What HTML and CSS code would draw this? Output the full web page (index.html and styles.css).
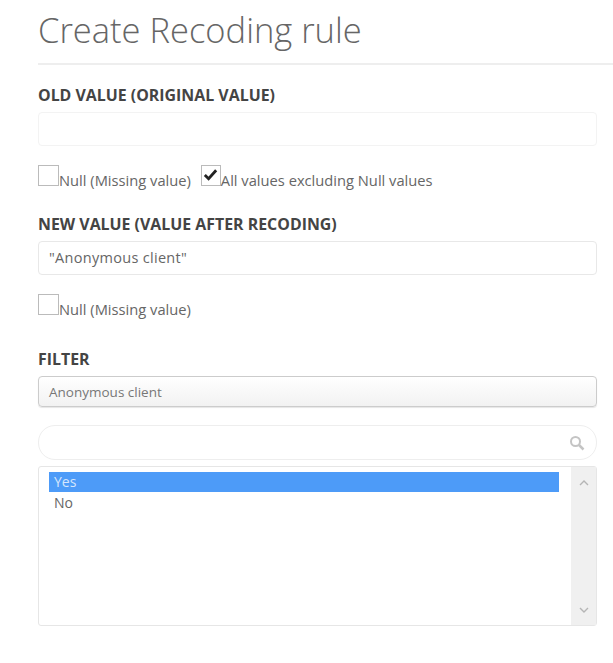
FILE: index.html
```html
<!DOCTYPE html>
<html lang="en">
<head>
    <meta charset="UTF-8">
    <meta name="viewport" content="width=device-width, initial-scale=1.0">
    <title>Create Recoding rule</title>
    <link rel="stylesheet" href="styles.css">
</head>
<body>
    <div class="modal-header">
        <h1>Create Recoding rule</h1>
    </div>
    <div class="modal-body">
        <label class="field-label">OLD VALUE (ORIGINAL VALUE)</label>
        <div class="text-input text-input-faint"></div>
        <div class="check-row">
            <span class="check-box"></span><span class="check-text">Null (Missing value)</span>
            <span class="check-box check-box-small">
                <svg viewBox="0 0 18 18" width="17" height="17"><path d="M3 9.5l4 4 8-9" fill="none" stroke="#222" stroke-width="3"/></svg>
            </span><span class="check-text">All values excluding Null values</span>
        </div>

        <label class="field-label new-label">NEW VALUE (VALUE AFTER RECODING)</label>
        <div class="text-input">"Anonymous client"</div>
        <div class="check-row">
            <span class="check-box"></span><span class="check-text">Null (Missing value)</span>
        </div>

        <label class="field-label filter-label">FILTER</label>
        <div class="select-box">Anonymous client</div>
        <div class="search-box">
            <svg viewBox="0 0 16 16" width="16" height="16"><circle cx="6.5" cy="6.5" r="4.5" fill="none" stroke="#c4c4c4" stroke-width="2"/><path d="M10 10l4.5 4.5" stroke="#c4c4c4" stroke-width="2.5"/></svg>
        </div>
        <div class="list-box">
            <div class="list-items">
                <div class="list-item list-item-selected">Yes</div>
                <div class="list-item">No</div>
            </div>
            <div class="scrollbar">
                <svg viewBox="0 0 10 6" width="10" height="6"><path d="M1 5l4-4 4 4" fill="none" stroke="#b5b5b5" stroke-width="1.4"/></svg>
                <svg viewBox="0 0 10 6" width="10" height="6"><path d="M1 1l4 4 4-4" fill="none" stroke="#b5b5b5" stroke-width="1.4"/></svg>
            </div>
        </div>
    </div>
</body>
</html>
```

FILE: styles.css
```css
* {
    box-sizing: border-box;
}

body {
    font-family: 'Open Sans', sans-serif;
    font-size: 14px;
    color: #666;
    background-color: #fff;
    margin: 0;
    overflow: hidden;
}

.modal-header {
    margin-left: 38px;
    height: 65px;
    padding-top: 8px;
    border-bottom: 2px solid #eee;
}

h1 {
    font-size: 34.5px;
    font-weight: 300;
    line-height: 44px;
    color: #666;
    margin: 0;
}

.modal-body {
    padding: 0 16px 0 38px;
}

.field-label {
    display: block;
    font-size: 15.9px;
    font-weight: 700;
    line-height: 20px;
    color: #444;
    margin-top: 20px;
    margin-bottom: 7px;
}

.new-label {
    margin-top: 28px;
}

.text-input {
    height: 34px;
    border: 1px solid #e8e8e8;
    border-radius: 4px;
    padding: 0 10px;
    line-height: 32px;
    font-size: 14.5px;
    letter-spacing: 0.3px;
}

.text-input-faint {
    border-color: #f3f3f3;
}

.check-row {
    display: flex;
    align-items: flex-end;
    margin-top: 19px;
    height: 21px;
    font-size: 14.7px;
}

.check-box {
    width: 21px;
    height: 21px;
    border: 1px solid #bbb;
    flex-shrink: 0;
}

.check-box-small {
    width: 20px;
    height: 21px;
    margin-left: 10px;
}

.check-box svg {
    display: block;
}

.check-text {
    line-height: 17px;
    transform: translateY(3px);
}

.filter-label {
    margin-top: 34px;
}

.select-box {
    height: 31px;
    border: 1px solid #ccc;
    border-radius: 4px;
    padding: 0 10px;
    line-height: 31px;
    font-size: 13.5px;
    color: #777;
    background: linear-gradient(#fff, #f2f2f2);
    box-shadow: 0 1px 1px rgba(0, 0, 0, 0.1);
}

.search-box {
    display: flex;
    align-items: center;
    justify-content: flex-end;
    height: 35px;
    margin-top: 18px;
    padding-right: 11px;
    border: 1px solid #eee;
    border-radius: 17px;
}

.list-box {
    display: flex;
    height: 160px;
    margin-top: 6px;
    border: 1px solid #e6e6e6;
    border-radius: 3px;
}

.list-items {
    flex: 1;
    padding: 5px 12px 0 10px;
    line-height: 20px;
}

.list-item {
    height: 20px;
    padding-left: 5px;
    margin-bottom: 1px;
}

.list-item-selected {
    background-color: #4d9bf8;
    color: #d5e6fc;
}

.scrollbar {
    display: flex;
    flex-direction: column;
    justify-content: space-between;
    align-items: center;
    width: 25px;
    padding: 13px 0 12px;
    background-color: #f0f0f0;
}
```
